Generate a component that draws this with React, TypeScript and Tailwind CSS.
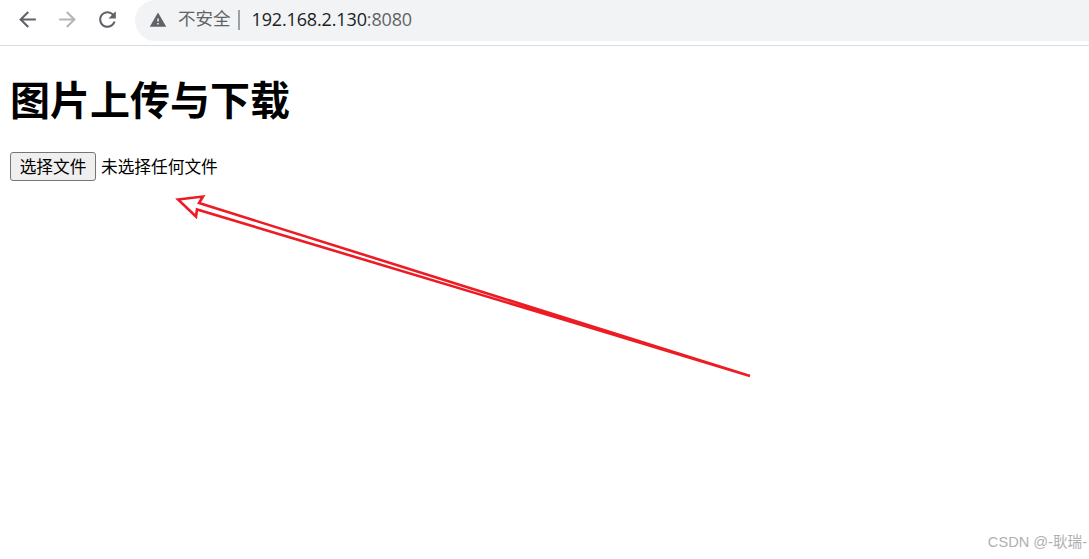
import React from 'react';

const cjk = "font-['Liberation_Sans','Noto_Sans_CJK_SC',sans-serif]";

function ToolbarIcon({ d, className }: { d: string; className: string }) {
  return (
    <svg viewBox="0 0 24 24" className={className} fill="currentColor">
      <path d={d} />
    </svg>
  );
}

export default function App() {
  return (
    <div className={`relative h-[559px] w-full overflow-hidden bg-white text-black ${cjk}`}>
      <div className="flex h-[46px] items-start border-b border-[#dadce0] bg-white">
        <div className="flex h-[38px] w-[135px] items-center gap-[15px] pl-[15px] text-[#5f6368]">
          <ToolbarIcon className="h-[25px] w-[25px]" d="M20 11H7.83l5.59-5.59L12 4l-8 8 8 8 1.41-1.41L7.83 13H20v-2z" />
          <ToolbarIcon className="h-[25px] w-[25px] text-[#b4b6b9]" d="M12 4l-1.41 1.41L16.17 11H4v2h12.17l-5.58 5.59L12 20l8-8z" />
          <ToolbarIcon className="h-[25px] w-[25px]" d="M17.65 6.35C16.2 4.9 14.21 4 12 4c-4.42 0-7.99 3.58-7.99 8s3.57 8 7.99 8c3.73 0 6.84-2.55 7.73-6h-2.08c-.82 2.33-3.04 4-5.65 4-3.31 0-6-2.69-6-6s2.69-6 6-6c1.66 0 3.14.69 4.22 1.78L13 11h7V4l-2.35 2.35z" />
        </div>
        <div className="flex h-[41px] flex-1 items-center rounded-l-[21px] bg-[#f1f3f4] pb-[2px] pl-[14px]">
          <ToolbarIcon className="h-[18px] w-[18px] text-[#5f6368]" d="M1 21h22L12 2 1 21zm12-3h-2v-2h2v2zm0-4h-2v-4h2v4z" />
          <span className="ml-[11px] text-[17.5px] text-[#5f6368]">不安全</span>
          <span className="ml-[7px] h-[20px] w-[2px] bg-[#9aa0a6]" />
          <span className="ml-[12px] font-['Open_Sans',sans-serif] text-[18px] tracking-[-0.14px] text-[#202124]">
            192.168.2.130<span className="text-[#5f6368]">:8080</span>
          </span>
        </div>
      </div>

      <div className="px-[10px]">
        <h1 className="mt-[30px] text-[40px] font-bold leading-[50px]">图片上传与下载</h1>
        <div className="mt-[26px] flex items-center">
          <button className="h-[29px] w-[86px] rounded-[3px] border border-[#767676] bg-[#efefef] pt-[3px] text-[16.7px] leading-none">
            选择文件
          </button>
          <span className="ml-[5px] pt-[2px] text-[16.7px]">未选择任何文件</span>
        </div>
      </div>

      <svg className="absolute left-0 top-0 h-[559px] w-[1089px]" viewBox="0 0 1089 559" fill="none">
        <path
          d="M178 199.5 L203 196.5 L199 203 L575 321 L750 376 L575 323 L197 209.5 L196 216.5 Z"
          stroke="#ed1c24"
          strokeWidth="2.6"
          strokeLinejoin="miter"
        />
      </svg>

      <div className="absolute bottom-[8px] right-[2px] text-[14.6px] leading-[18px] text-[#b0b0b0]">CSDN @-耿瑞-</div>
    </div>
  );
}
